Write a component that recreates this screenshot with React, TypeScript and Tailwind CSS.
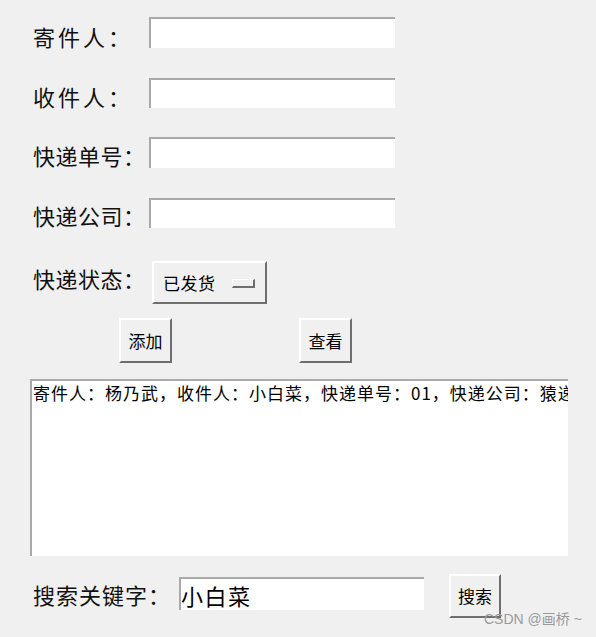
import React from "react";

const cjk = { fontFamily: '"Noto Sans CJK SC", "Noto Sans", sans-serif' };

function Entry({ w, h, children }: { w: string; h: string; children?: React.ReactNode }) {
  return (
    <div
      className={`${w} ${h} shrink-0 bg-white border-t-2 border-l-2 border-t-[#a9a9a9] border-l-[#a9a9a9] flex items-center overflow-hidden`}
    >
      {children}
    </div>
  );
}

function Btn({ children, className }: { children: React.ReactNode; className: string }) {
  return (
    <div
      className={`${className} shrink-0 bg-[#f0f0f0] border-t-2 border-l-2 border-t-white border-l-white border-b-2 border-r-2 border-b-[#6e6e6e] border-r-[#6e6e6e] flex items-center text-[17px] text-black`}
    >
      {children}
    </div>
  );
}

export default function App() {
  const labelCls = "shrink-0 whitespace-nowrap text-[22px] text-[#111] leading-none";
  return (
    <div className="relative w-[596px] h-[637px] bg-[#f0f0f0] overflow-hidden" style={cjk}>
      <div className="pt-[17px] pl-[33px] flex flex-col">
        <div className="flex items-center h-[31px]">
          <div className={`${labelCls} w-[116px] mt-[6px] tracking-[3px]`}>寄件人：</div>
          <Entry w="w-[246px]" h="h-[31px]" />
        </div>
        <div className="flex items-center h-[30px] mt-[30px]">
          <div className={`${labelCls} w-[116px] mt-[6px] tracking-[3px]`}>收件人：</div>
          <Entry w="w-[246px]" h="h-[30px]" />
        </div>
        <div className="flex items-center h-[31px] mt-[29px]">
          <div className={`${labelCls} w-[116px] mt-[4px] tracking-[0.5px]`}>快递单号：</div>
          <Entry w="w-[246px]" h="h-[31px]" />
        </div>
        <div className="flex items-center h-[30px] mt-[30px]">
          <div className={`${labelCls} w-[116px] mt-[4px] tracking-[0.5px]`}>快递公司：</div>
          <Entry w="w-[246px]" h="h-[30px]" />
        </div>
        <div className="flex items-start mt-[33px]">
          <div className={`${labelCls} w-[119px] mt-[6px] tracking-[0.5px]`}>快递状态：</div>
          <Btn className="w-[115px] h-[43px] pl-[9px]">
            <span className="text-[17px] tracking-[0.5px]">已发货</span>
            <span className="ml-[16px] mt-[2px] w-[23px] h-[9px] bg-[#f0f0f0] border-t border-l border-t-white border-l-white border-b-2 border-r-2 border-b-[#6e6e6e] border-r-[#6e6e6e]" />
          </Btn>
        </div>
        <div className="flex mt-[14px] pl-[86px]">
          <Btn className="w-[53px] h-[45px] justify-center">添加</Btn>
          <Btn className="w-[53px] h-[45px] ml-[127px] justify-center">查看</Btn>
        </div>
      </div>
      <div className="ml-[30px] mt-[16px] w-[538px] h-[177px] bg-white border-t-2 border-l-2 border-t-[#a9a9a9] border-l-[#a9a9a9] overflow-hidden">
        <div className="pl-[1px] pt-[2px] whitespace-nowrap text-[17px] tracking-[1px] leading-[20px] text-black">
          寄件人：杨乃武，收件人：小白菜，快递单号：01，快递公司：猿递
        </div>
      </div>
      <div className="flex items-start mt-[18px] pl-[33px]">
        <div className={`${labelCls} w-[146px] mt-[9px] tracking-[1px]`}>搜索关键字：</div>
        <div className="mt-[3px]">
          <Entry w="w-[245px]" h="h-[33px]">
            <span className="text-[22px] tracking-[1.5px] leading-none mt-[1px]">小白菜</span>
          </Entry>
        </div>
        <Btn className="w-[52px] h-[44px] ml-[25px] justify-center">搜索</Btn>
      </div>
      <div
        className="absolute left-[484px] top-[612px] text-[14px] text-[#9a9a9a] leading-none whitespace-nowrap"
        style={{ fontFamily: '"Liberation Sans", "Noto Sans CJK SC", sans-serif' }}
      >
        CSDN @画桥 ~
      </div>
    </div>
  );
}
